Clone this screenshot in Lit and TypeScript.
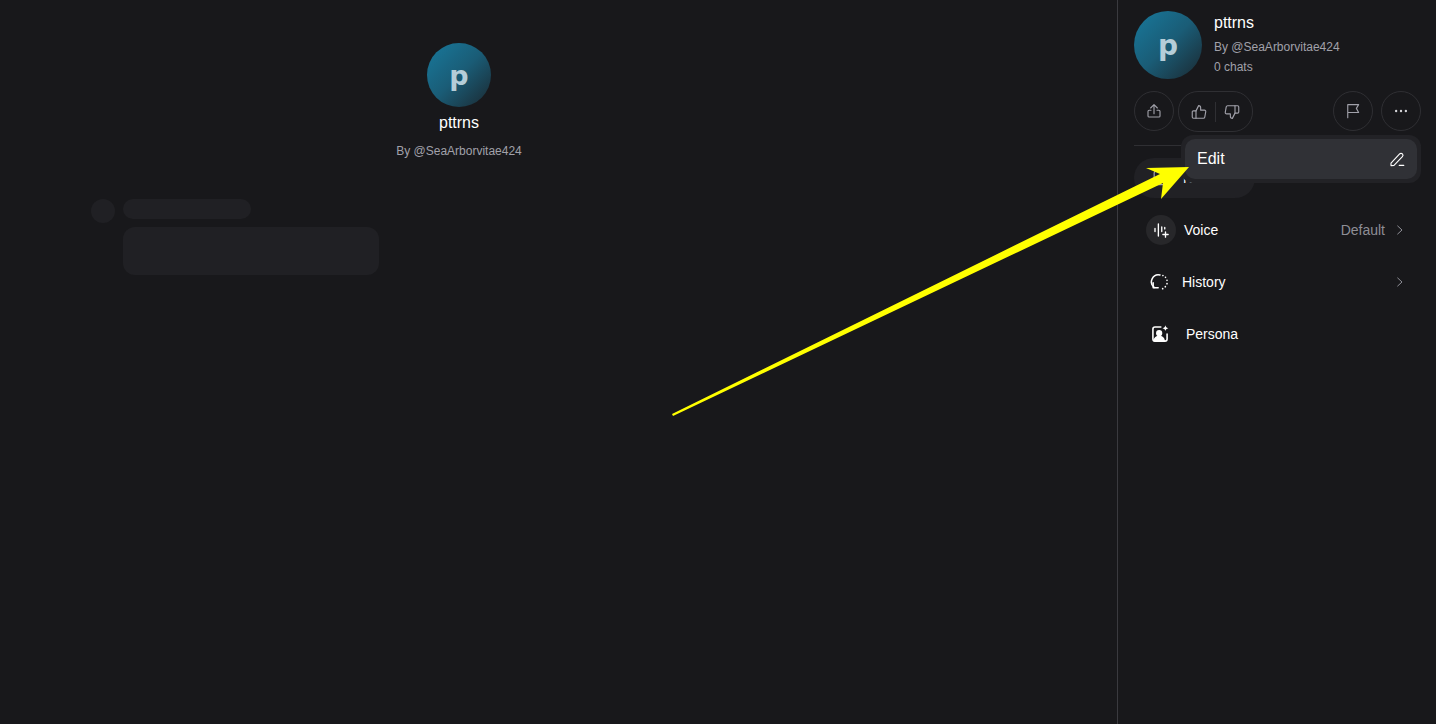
import { LitElement, html, css, svg } from "lit";
import { customElement } from "lit/decorators.js";

const ico = (size: number, body: unknown, sw = 1.5) => html`<svg width=${size} height=${size} viewBox="0 0 24 24" fill="none" stroke="currentColor" stroke-width=${sw} stroke-linecap="round" stroke-linejoin="round">${body}</svg>`;

const share = svg`<path d="M12 15.500V4M7.500 8 12 3.500 16.500 8"/><path d="M8 11H5.500A1.500 1.500 0 0 0 4 12.500v6A1.500 1.500 0 0 0 5.500 20h13a1.500 1.500 0 0 0 1.500-1.500v-6a1.500 1.500 0 0 0-1.500-1.500H16"/>`;
const up = svg`<path d="M8 10.500 11.500 3.500c1.600 0 2.700 1.200 2.700 2.800V9.500h5.100c1.100 0 1.900 1 1.700 2l-1.300 7.300c-.2.900-.9 1.500-1.800 1.500H8z"/><path d="M8 10.500H4.500c-.8 0-1.500.7-1.500 1.500v6.800c0 .8.7 1.500 1.500 1.500H8"/>`;
const down = svg`<path d="M16 13.500 12.500 20.500c-1.600 0-2.700-1.200-2.700-2.800V14.500H4.700c-1.100 0-1.900-1-1.700-2l1.300-7.300c.2-.9.900-1.500 1.800-1.500H16z"/><path d="M16 3.700h3.500c.8 0 1.500.7 1.500 1.500V12c0 .8-.7 1.500-1.500 1.500H16"/>`;
const flag = svg`<path d="M5 21V3.500h14.500l-3 5 3 5.500H5"/>`;
const pencil = svg`<path d="M4 17.500 15.500 5.200a2.600 2.600 0 0 1 3.700 0 2.600 2.600 0 0 1 0 3.600L8 20.500l-4 .5z"/><path d="M15 20.500h6"/>`;
const voice = svg`<path d="M4 10v4M8.500 4v16M13 8v6"/><path d="M17 8.500v2M18 14.500v7M14.500 18h7"/>`;
const history = svg`<path d="M12 3.500A8.500 8.500 0 0 0 5 18.500"/><path d="M3.800 13v6h6"/><path d="M15.500 4.300h.01M18.600 6.400h.01M20.400 10h.01M20.400 14h.01M18.400 17.600h.01M15.200 20h.01" stroke-width="2"/>`;
const persona = svg`<path d="M13 3.500H6A2.500 2.500 0 0 0 3.500 6v12A2.500 2.500 0 0 0 6 20.500h12a2.500 2.500 0 0 0 2.500-2.500v-6"/><circle cx="11" cy="11" r="2.800" fill="currentColor"/><path d="M5 20c.6-3.400 3-5 6-5s5.400 1.600 6 5z" fill="currentColor"/><path d="M18.500 1.500c.4 2 1.200 2.900 3.500 3.500-2.300.6-3.100 1.500-3.500 3.500-.4-2-1.200-2.900-3.500-3.500 2.300-.6 3.100-1.500 3.500-3.500z" fill="currentColor" stroke="none"/>`;
const chevron = svg`<path d="m8.500 6 6.500 6-6.500 6"/>`;
const dots = svg`<circle cx="5.500" cy="12" r="1.600" fill="currentColor" stroke="none"/><circle cx="12" cy="12" r="1.600" fill="currentColor" stroke="none"/><circle cx="18.500" cy="12" r="1.600" fill="currentColor" stroke="none"/>`;
const chat = svg`<rect x="5" y="4" width="15" height="16" rx="2"/>`;

@customElement("app-root")
export class AppRoot extends LitElement {
  static styles = css`
    :host { display: block; height: 724px; background: #18181b; font-family: "Liberation Sans", Arial, sans-serif; color: #fff; overflow: hidden; position: relative; }
    .page { display: flex; height: 724px; }
    .main { flex: 1; min-width: 0; }
    .chat { width: 918px; display: flex; flex-direction: column; align-items: center; padding-top: 43px; box-sizing: border-box; }
    .avatar { border-radius: 50%; background: linear-gradient(135deg, #18799c 0%, #1a5c76 50%, #1b2830 100%); display: flex; align-items: center; justify-content: center; color: #b5cdd8; font-family: "DejaVu Sans", sans-serif; font-weight: 700; flex: none; }
    .avatar.lg { width: 64px; height: 64px; font-size: 27px; }
    .avatar.xl { width: 68px; height: 68px; font-size: 28px; }
    .name { font-size: 16px; line-height: 20px; margin-top: 6px; }
    .by { font-size: 12px; line-height: 16px; color: #a1a1aa; margin-top: 10px; }
    .skeleton { width: 736px; display: flex; gap: 8px; margin-top: 40px; }
    .sk-dot { width: 24px; height: 24px; border-radius: 50%; background: #202024; flex: none; }
    .sk-col { display: flex; flex-direction: column; gap: 8px; }
    .sk-a { width: 128px; height: 20px; border-radius: 10px; background: #202024; }
    .sk-b { width: 256px; height: 48px; border-radius: 12px; background: #202024; }
    .side { width: 319px; box-sizing: border-box; border-left: 1px solid #3a3a3f; padding: 11px 15px 0 16px; position: relative; display: flex; flex-direction: column; }
    .head { display: flex; gap: 12px; }
    .meta { display: flex; flex-direction: column; }
    .title { font-size: 16px; line-height: 22px; padding-top: 1px; }
    .sub { font-size: 12px; line-height: 16px; color: #a1a1aa; margin-top: 5px; }
    .sub + .sub { margin-top: 4px; }
    .actions { display: flex; align-items: flex-start; gap: 4px; margin-top: 12px; }
    .btn { width: 40px; height: 40px; box-sizing: border-box; border: 1px solid #2f2f33; border-radius: 50%; display: flex; align-items: center; justify-content: center; color: #a1a1aa; }
    .btn.light { color: #d4d4d8; margin-left: 4px; }
    .group { width: 75px; height: 41px; box-sizing: border-box; border: 1px solid #2f2f33; border-radius: 20px; display: flex; align-items: center; justify-content: center; gap: 7px; color: #a1a1aa; }
    .sep { width: 1px; height: 20px; background: #2f2f33; }
    .spacer { flex: 1; }
    .rule { height: 1px; background: #2f2f33; margin-top: 13px; }
    .list { display: flex; flex-direction: column; gap: 12px; margin-top: 12px; }
    .row { height: 40px; display: flex; align-items: center; padding: 0 13px 0 12px; font-size: 14px; border-radius: 20px; white-space: nowrap; }
    .row.active { width: 121px; box-sizing: border-box; background: #212125; gap: 13px; padding-left: 16px; padding-right: 0; }
    .row.active svg { color: #a1a1aa; }
    .row.voice { gap: 8px; }
    .row.history { gap: 12px; padding-left: 16px; }
    .row.persona { gap: 16px; padding-left: 16px; }
    .circle { width: 30px; height: 30px; border-radius: 50%; background: #27272a; display: flex; align-items: center; justify-content: center; }
    .value { margin-left: auto; color: #8e8e96; display: flex; align-items: center; gap: 7px; }
    .chev { margin-left: auto; color: #8e8e96; display: flex; }
    .menu { position: absolute; left: 63px; top: 135px; width: 240px; box-sizing: border-box; padding: 4px; background: #222226; border-radius: 12px; }
    .item { height: 40px; border-radius: 10px; background: #303136; display: flex; align-items: center; justify-content: space-between; padding: 0 11px 0 12px; font-size: 16px; }
    .arrow { position: absolute; inset: 0; pointer-events: none; }
  `;

  render() {
    return html`
      <div class="page">
        <div class="main">
          <div class="chat">
            <div class="avatar lg">p</div>
            <div class="name">pttrns</div>
            <div class="by">By @SeaArborvitae424</div>
            <div class="skeleton">
              <div class="sk-dot"></div>
              <div class="sk-col"><div class="sk-a"></div><div class="sk-b"></div></div>
            </div>
          </div>
        </div>
        <aside class="side">
          <div class="head">
            <div class="avatar xl">p</div>
            <div class="meta">
              <div class="title">pttrns</div>
              <div class="sub">By @SeaArborvitae424</div>
              <div class="sub">0 chats</div>
            </div>
          </div>
          <div class="actions">
            <div class="btn">${ico(18, share)}</div>
            <div class="group">${ico(18, up)}<span class="sep"></span>${ico(18, down)}</div>
            <div class="spacer"></div>
            <div class="btn">${ico(18, flag)}</div>
            <div class="btn light">${ico(18, dots)}</div>
          </div>
          <div class="rule"></div>
          <div class="list">
            <div class="row active">${ico(20, chat)}<span>New chat</span></div>
            <div class="row voice"><span class="circle">${ico(18, voice, 1.8)}</span><span>Voice</span><span class="value">Default ${ico(16, chevron)}</span></div>
            <div class="row history">${ico(20, history, 1.8)}<span>History</span><span class="chev">${ico(16, chevron)}</span></div>
            <div class="row persona">${ico(20, persona, 1.9)}<span>Persona</span></div>
          </div>
          <div class="menu"><div class="item"><span>Edit</span>${ico(18, pencil)}</div></div>
        </aside>
      </div>
      <svg class="arrow" width="1436" height="724" viewBox="0 0 1436 724">
        <polygon fill="#ffff00" points="672,414 1160,174 1146,168 1189,167 1161,199 1163,183 673,416"/>
      </svg>
    `;
  }
}
